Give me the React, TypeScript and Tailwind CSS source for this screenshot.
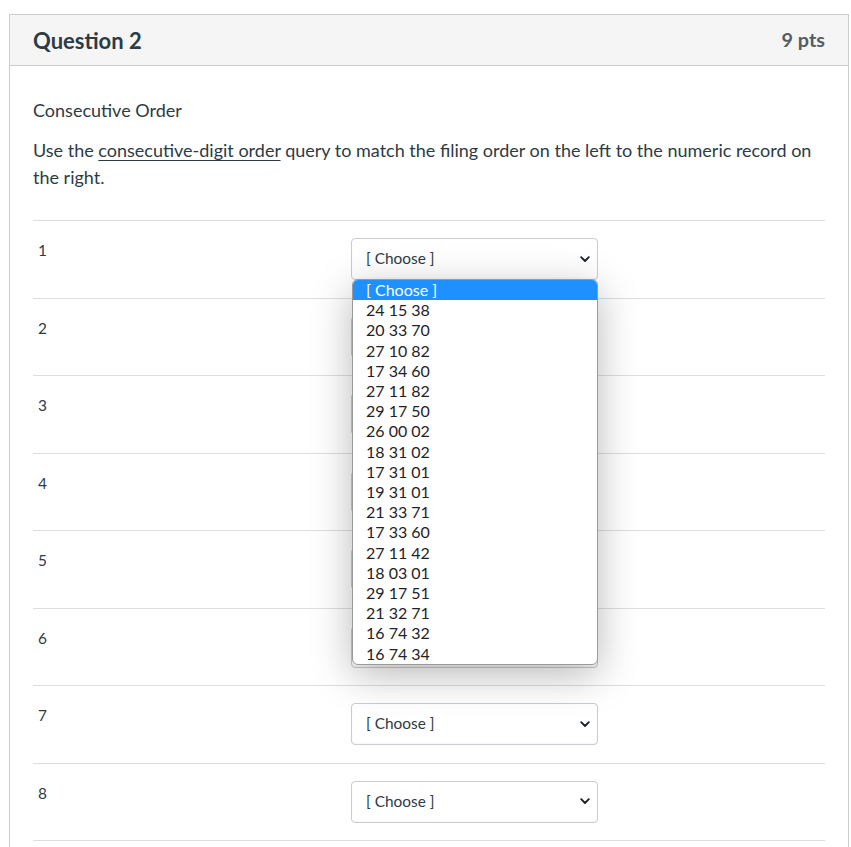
import React from 'react'

const options = [
  '24 15 38',
  '20 33 70',
  '27 10 82',
  '17 34 60',
  '27 11 82',
  '29 17 50',
  '26 00 02',
  '18 31 02',
  '17 31 01',
  '19 31 01',
  '21 33 71',
  '17 33 60',
  '27 11 42',
  '18 03 01',
  '29 17 51',
  '21 32 71',
  '16 74 32',
  '16 74 34',
]

function Chevron() {
  return (
    <svg width="10" height="7" viewBox="0 0 10 7" fill="none">
      <path d="M1.2 1.2 5 5 8.8 1.2" stroke="#1f2328" strokeWidth="1.9" strokeLinecap="round" strokeLinejoin="round" />
    </svg>
  )
}

function FakeSelect({ open, covered }: { open?: boolean; covered?: boolean }) {
  return (
    <div className="relative w-[247px]">
      <div className="flex h-[42px] items-center justify-between rounded-[4px] border border-[#c7cdd1] bg-white pl-[14px] pr-[7px] text-[15.4px] text-[#2d3b45] shadow-[inset_0_-1px_2px_rgba(0,0,0,0.04)]">
        {covered ? <span /> : <span>[ Choose ]</span>}
        <Chevron />
      </div>
      {open && (
        <div className="absolute left-[1px] top-[41px] z-10 w-[246px] overflow-hidden rounded-[6px] border border-[#9a9a9a] bg-white text-[16px] leading-[20.2px] text-[#1f2328] shadow-[0_10px_40px_rgba(0,0,0,0.28)]">
          <div className="bg-[#1e90ff] pl-[13px] text-white">[ Choose ]</div>
          {options.map(o => (
            <div key={o} className="pl-[13px]">
              {o}
            </div>
          ))}
        </div>
      )}
    </div>
  )
}

export default function App() {
  const rows = [1, 2, 3, 4, 5, 6, 7, 8]
  return (
    <div className="min-h-screen bg-white pt-[14px] font-['Lato','Liberation_Sans',sans-serif] text-[#2d3b45]">
      <div className="ml-[9px] mr-[2px] border border-[#c7cdd1]">
        <div className="flex h-[51px] items-center justify-between border-b border-[#c7cdd1] bg-[#f5f5f5] px-[23px]">
          <h2 className="text-[22px] font-bold text-[#2d3b45]">Question 2</h2>
          <span className="text-[19.8px] font-bold text-[#555d63]">9 pts</span>
        </div>
        <div className="px-[23px] pt-[31px] pb-[40px]">
          <p className="text-[18px] leading-[26px]">Consecutive Order</p>
          <p className="mt-[14px] text-[18px] leading-[27px]">
            Use the <span className="underline underline-offset-[3px]">consecutive-digit order</span> query to match the filing order on the left to the numeric record on the right.
          </p>
          <div className="mt-[29px]">
            {rows.map(n => (
              <div key={n} className="flex h-[77.5px] border-t border-[#dcdfe1]">
                <div className="w-[318px] pl-[5px] pt-[18px] text-[15.4px] leading-[22px]">{n}</div>
                <div className="pt-[17px]">
                  <FakeSelect open={n === 1} covered={n > 1 && n < 7} />
                </div>
              </div>
            ))}
            <div className="border-t border-[#dcdfe1]" />
          </div>
        </div>
      </div>
    </div>
  )
}
